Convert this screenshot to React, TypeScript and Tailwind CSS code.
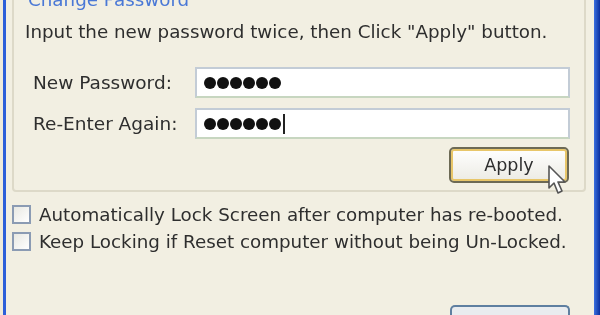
import React from 'react';

const font = { fontFamily: '"DejaVu Sans", Tahoma, Verdana, sans-serif' };

const Dots: React.FC<{ caret?: boolean }> = ({ caret }) => (
    <div className="flex items-center gap-[1px] pl-[7px]">
        {Array.from({ length: 6 }).map((_, i) => (
            <span key={i} className="w-[12px] h-[12px] rounded-full bg-[#111]" />
        ))}
        {caret && <span className="w-[2px] h-[20px] bg-[#222] ml-[1px]" />}
    </div>
);

const Field: React.FC<{ label: string; caret?: boolean }> = ({ label, caret }) => (
    <div className="flex items-center h-[31px]">
        <span className="w-[181px] pl-[19px] text-[18.5px] text-[#2e2e2e] whitespace-nowrap">{label}</span>
        <div className="flex-1 h-full bg-white border-2 border-[#c3ccd6] border-b-[#c7d6c0] flex items-center">
            <Dots caret={caret} />
        </div>
    </div>
);

const Check: React.FC<{ label: string }> = ({ label }) => (
    <div className="flex items-center gap-[8px] h-[27px]">
        <span className="w-[19px] h-[19px] shrink-0 border-2 border-[#8b9bb3] bg-gradient-to-br from-[#e8e8e2] to-white" />
        <span className="text-[18.3px] text-[#2e2e2e] whitespace-nowrap">{label}</span>
    </div>
);

export default function App() {
    return (
        <div className="w-[600px] h-[315px] overflow-hidden bg-[#f2efe2] flex relative blur-[0.4px]" style={font}>
            <div className="w-[3px] bg-[#eeeadb]" />
            <div className="w-[3px] bg-[#2c5fd9]" />

            <div className="flex-1 flex flex-col pl-[6px] pr-[8px]">
                {/* Group box */}
                <div className="relative mt-[-12px] h-[204px] border-2 border-[#ddd9c8] rounded-[4px] pr-[14px]">
                    <span className="absolute left-[11px] top-[0px] px-[3px] bg-[#f2efe2] text-[18.3px] text-[#4a78d6] leading-[20px] whitespace-nowrap">
                        Change Password
                    </span>
                    <p className="mt-[32px] pl-[11px] text-[18.3px] text-[#2e2e2e] leading-[20px] whitespace-nowrap">
                        Input the new password twice, then Click "Apply" button.
                    </p>
                    <div className="mt-[25px] flex flex-col gap-[10px]">
                        <Field label="New Password:" />
                        <Field label="Re-Enter Again:" caret />
                    </div>
                    <div className="flex justify-end mt-[8px] pr-[1px]">
                        <div className="relative">
                            <button className="w-[120px] h-[36px] rounded-[5px] border-2 border-[#6d6a55] bg-gradient-to-b from-white to-[#ecebe4] shadow-[inset_0_0_0_2px_#e8c66a] text-[17.5px] text-[#2e2e2e]">
                                Apply
                            </button>
                            <svg className="absolute left-[98px] top-[18px]" width="20" height="30" viewBox="0 0 20 30">
                                <path d="M2 1 L2 23 L7 18 L11 28 L15 26 L11 17 L18 17 Z" fill="white" stroke="#555" strokeWidth="1.6" strokeLinejoin="round" />
                            </svg>
                        </div>
                    </div>
                </div>

                {/* Options */}
                <div className="mt-[9px] flex flex-col">
                    <Check label="Automatically Lock Screen after computer has re-booted." />
                    <Check label="Keep Locking if Reset computer without being Un-Locked." />
                </div>

                <div className="flex-1" />
                <div className="flex justify-end pr-[16px]">
                    <div className="w-[120px] h-[10px] rounded-t-[5px] border-2 border-b-0 border-[#5f7fa0] bg-[#e9ecef]" />
                </div>
            </div>

            <div className="w-[6px] bg-gradient-to-r from-[#3a6fe0] to-[#0b2f9e]" />
        </div>
    );
}
